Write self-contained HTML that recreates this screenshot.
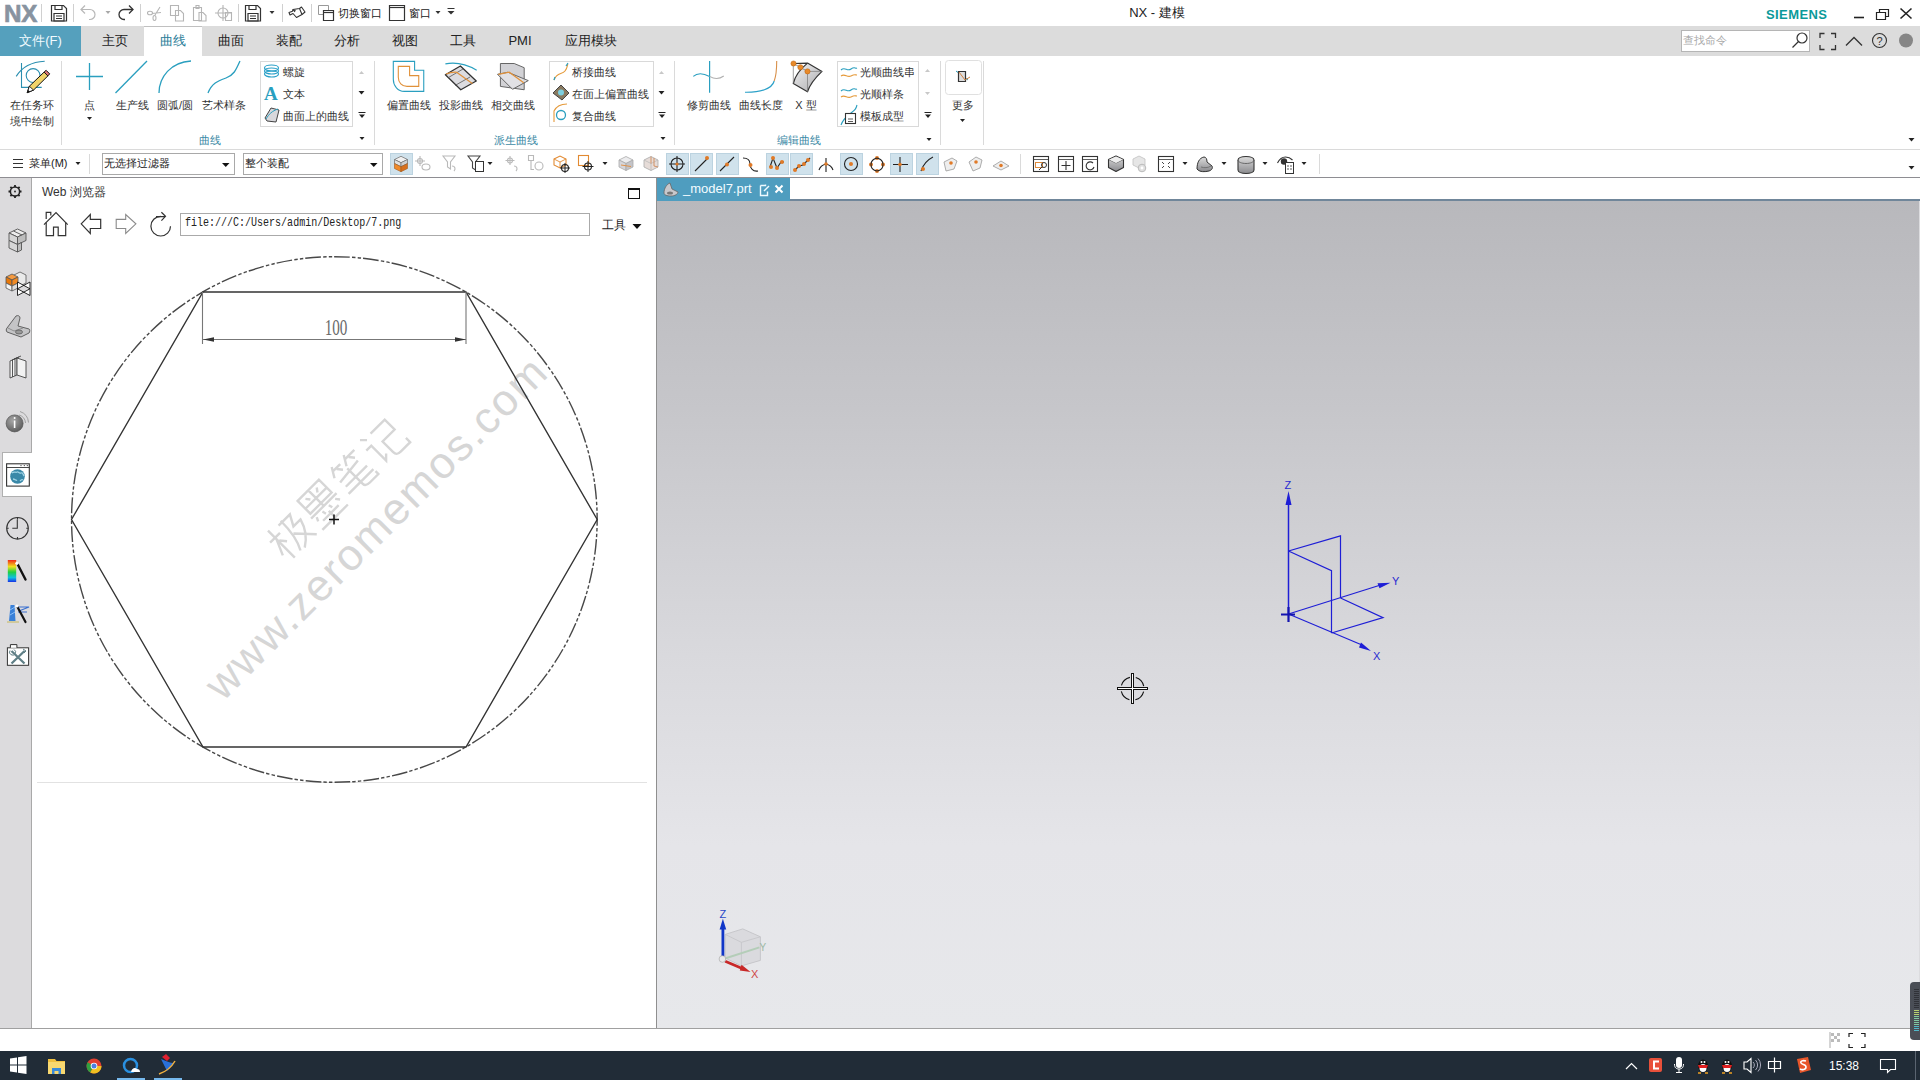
<!DOCTYPE html>
<html><head><meta charset="utf-8">
<style>
*{box-sizing:border-box;margin:0;padding:0}
html,body{width:1920px;height:1080px;overflow:hidden;background:#fff;font-family:"Liberation Sans",sans-serif;color:#222}
.a{position:absolute}
#title{left:0;top:0;width:1920px;height:26px;background:#fff}
#tabs{left:0;top:26px;width:1920px;height:30px;background:#dcdcdc}
#ribbon{left:0;top:56px;width:1920px;height:94px;background:#fff;border-bottom:1px solid #dadada}
#selbar{left:0;top:150px;width:1920px;height:28px;background:#fff;border-bottom:1px solid #8e8d92}
#leftbar{left:0;top:178px;width:32px;height:850px;background:#dcdbdd;border-right:1px solid #a9a9a9}
#web{left:32px;top:178px;width:624px;height:850px;background:#fff}
#vpborder{left:656px;top:178px;width:1px;height:850px;background:#8f8f8f}
#vptabs{left:657px;top:178px;width:1263px;height:21px;background:#fff}
#vpline{left:657px;top:199px;width:1263px;height:2px;background:#70869a}
#vp{left:657px;top:201px;width:1262px;height:827px;background:linear-gradient(#b8b8bc 0%,#c6c6ca 25%,#d9d9dd 55%,#e5e5e9 78%,#e7e8eb 100%)}
#vpright{left:1919px;top:201px;width:1px;height:827px;background:#dcdcdf}
#bottomline{left:0;top:1028px;width:1920px;height:1px;background:#a0a0a0}
#status{left:0;top:1029px;width:1920px;height:22px;background:#fff}
#taskbar{left:0;top:1051px;width:1920px;height:29px;background:#212c37}
.cj{display:inline-block;text-align:justify;text-align-last:justify;white-space:nowrap;overflow:visible}
.tab{position:absolute;top:26px;height:30px;font-size:13px;line-height:30px;text-align:center;color:#222}
</style></head>
<body>
<div id="title" class="a"></div>
<div id="tabs" class="a"></div>
<div id="ribbon" class="a"></div>
<div id="selbar" class="a"></div>
<div id="leftbar" class="a"></div>
<div id="web" class="a"></div>
<div id="vpborder" class="a"></div>
<div id="vptabs" class="a"></div>
<div id="vpline" class="a"></div>
<div id="vp" class="a"></div>
<div id="vpright" class="a"></div>
<div id="bottomline" class="a"></div>
<div id="status" class="a"></div>
<div id="taskbar" class="a"></div>
<!-- TITLE BAR -->
<div class="a" style="left:4px;top:1px;font:bold 22px/25px 'Liberation Sans',sans-serif;color:#8893a0;letter-spacing:-0.3px;-webkit-text-stroke:0.6px #8893a0;transform-origin:0 0;transform:scale(1.1,1.05)">NX</div>
<svg class="a" style="left:0;top:0" width="470" height="26">
 <g stroke="#d0d0d0" stroke-width="1"><line x1="41.5" y1="4" x2="41.5" y2="22"/><line x1="73.5" y1="4" x2="73.5" y2="22"/><line x1="140.5" y1="4" x2="140.5" y2="22"/><line x1="238.5" y1="4" x2="238.5" y2="22"/><line x1="282.5" y1="4" x2="282.5" y2="22"/><line x1="311.5" y1="4" x2="311.5" y2="22"/></g>
 <!-- save -->
 <g fill="none" stroke="#333" stroke-width="1.2"><path d="M51.5 5.5h12l3 3v12.5h-15z"/><path d="M55 5.5v4h7v-4"/><path d="M54 13.5h10v7.5H54z"/><path d="M56 16h6M56 18.5h6"/></g>
 <!-- undo gray -->
 <g fill="none" stroke="#b8b8b8" stroke-width="1.2"><path d="M81 9.5h9a5 5 0 0 1 0 10h-1"/><path d="M85 5.5l-4 4 4 4"/></g>
 <path d="M105.5 11h5l-2.5 3z" fill="#a8a8a8"/>
 <!-- redo -->
 <g fill="none" stroke="#333" stroke-width="1.3"><path d="M133 9.5h-9a5 5 0 0 0 0 10h1"/><path d="M129 5.5l4 4-4 4"/></g>
 <!-- scissors copy paste cross (gray) -->
 <g fill="none" stroke="#b5b5b5" stroke-width="1.1">
  <ellipse cx="150" cy="13" rx="2.5" ry="1.8"/><ellipse cx="154.5" cy="18" rx="1.5" ry="2.5"/><path d="M152 13.5l9-1M155 15l5-8"/>
  <path d="M170.5 5.5h8v10h-8z"/><path d="M175.5 10.5h5l3 3v7.5h-8z"/>
  <path d="M193.5 7.5h8v13h-8z"/><path d="M196 5.5h3v3h-3z"/><path d="M199 12.5h4l3 3v5.5h-7z"/>
  <circle cx="223" cy="13" r="5"/><path d="M223 5v16M215 13h16"/><path d="M225.5 12.5h6v8h-6z"/>
 </g>
 <!-- save2 -->
 <g fill="none" stroke="#333" stroke-width="1.2"><path d="M245.5 5.5h12l3 3v12.5h-15z"/><path d="M249 5.5v4h7v-4"/><path d="M248 13.5h10v7.5h-10z"/><path d="M250 16h6M250 18.5h6"/></g>
 <path d="M269.5 11h5l-2.5 3z" fill="#333"/>
 <!-- brush -->
 <path d="M293 9.5L299.5 8.5L301.5 7L305 12L302 14.5L296.5 17.5L293 13.5L290 15L289 12.5L292.5 11.2Z" fill="#fff" stroke="#333" stroke-width="1.1" stroke-linejoin="round"/><path d="M299.5 8.5L302 14.5M293 9.5l2 2.5" fill="none" stroke="#333" stroke-width="1.1"/><path d="M292.5 9.5l3.5 0.5-1.5 2z" fill="#444"/>
 <!-- switch window -->
 <g fill="#fff" stroke="#999" stroke-width="1"><path d="M318.5 5.5h10v9h-10z"/></g>
 <g fill="#fff" stroke="#333" stroke-width="1.2"><path d="M323.5 10.5h10v10h-10z"/><path d="M323.5 12.5h10"/></g>
 <g fill="none" stroke="#333" stroke-width="1.2"><path d="M389.5 5.5h15v15h-15z"/><path d="M389.5 7.5h15"/></g>
 <path d="M435.5 11h5l-2.5 3z" fill="#333"/>
 <path d="M447.5 8.5h7" stroke="#333" stroke-width="1"/><path d="M447.5 11h7l-3.5 3.5z" fill="#333"/>
</svg>
<div class="a" style="left:338px;top:6px;font-size:11px;line-height:14px;color:#222;white-space:nowrap"><span class="cj" style="width:44px">切换窗口</span></div>
<div class="a" style="left:409px;top:6px;font-size:11px;line-height:14px;color:#222;white-space:nowrap"><span class="cj" style="width:22px">窗口</span></div>
<div class="a" style="left:1100px;top:4px;width:114px;text-align:center;font-size:13px;line-height:17px;color:#222;white-space:nowrap">NX - <span class="cj" style="width:26px">建模</span></div>
<div class="a" style="left:1766px;top:7px;font:bold 13px/16px 'Liberation Sans',sans-serif;color:#0a9a9a;letter-spacing:0.4px">SIEMENS</div>
<svg class="a" style="left:1840px;top:0" width="80" height="26">
 <path d="M14 17.5h10" stroke="#222" stroke-width="1.6"/>
 <g fill="none" stroke="#222" stroke-width="1.2"><path d="M36.5 12.5h9v7h-9z"/><path d="M39.5 12.5v-3h9v7h-3"/></g>
 <path d="M60.5 8.5l11 10M71.5 8.5l-11 10" stroke="#222" stroke-width="1.6"/>
</svg>
<!-- TABS -->
<div class="a" style="left:0;top:26px;width:81px;height:30px;background:#55a0bd"></div>
<div class="a" style="left:144px;top:26px;width:58px;height:30px;background:#fff;border-top:1px solid #c0c0c0"></div>
<div class="tab" style="left:0;width:81px;color:#f2fbff"><span class="cj" style="width:26px">文件</span>(F)</div>
<div class="tab" style="left:86px;width:58px"><span class="cj" style="width:26px">主页</span></div>
<div class="tab" style="left:144px;width:58px;color:#2a7d98"><span class="cj" style="width:26px">曲线</span></div>
<div class="tab" style="left:202px;width:58px"><span class="cj" style="width:26px">曲面</span></div>
<div class="tab" style="left:260px;width:58px"><span class="cj" style="width:26px">装配</span></div>
<div class="tab" style="left:318px;width:58px"><span class="cj" style="width:26px">分析</span></div>
<div class="tab" style="left:376px;width:58px"><span class="cj" style="width:26px">视图</span></div>
<div class="tab" style="left:434px;width:58px"><span class="cj" style="width:26px">工具</span></div>
<div class="tab" style="left:491px;width:58px">PMI</div>
<div class="tab" style="left:556px;width:70px"><span class="cj" style="width:52px">应用模块</span></div>
<div class="a" style="left:1681px;top:30px;width:129px;height:22px;background:#fff;border:1px solid #b5b5b5"></div>
<div class="a" style="left:1683px;top:33px;font-size:11px;line-height:15px;color:#aaa;white-space:nowrap"><span class="cj" style="width:44px">查找命令</span></div>
<svg class="a" style="left:1785px;top:26px" width="135" height="30">
 <g fill="none" stroke="#333" stroke-width="1.2"><circle cx="17" cy="12" r="5"/><path d="M13.5 15.5l-6 6"/></g>
 <g fill="none" stroke="#333" stroke-width="1.3"><path d="M35 12v-4.5h4.5M46 7.5h4.5V12M50.5 19v4.5H46M39.5 23.5H35V19"/></g>
 <path d="M61 19.5l8-8 8 8" fill="none" stroke="#333" stroke-width="1.3"/>
 <circle cx="94.5" cy="14.5" r="7" fill="none" stroke="#333" stroke-width="1.1"/>
 <text x="94.5" y="18.5" font-size="11" text-anchor="middle" fill="#333" font-family="Liberation Sans">?</text>
 <circle cx="121" cy="14.5" r="7" fill="#868686"/>
</svg>

<!-- RIBBON -->
<style>
.lbl{position:absolute;font-size:11px;line-height:14px;color:#333;white-space:nowrap;text-align:center}
.glbl{position:absolute;top:133px;font-size:11px;line-height:14px;color:#3d8aa6;white-space:nowrap}
.gal{position:absolute;top:61px;height:66px;border:1px solid #d9d9d9;background:#fff}
.gi{position:absolute;font-size:11px;line-height:14px;color:#333;white-space:nowrap}
</style>
<svg class="a" style="left:0;top:56px" width="1920" height="93">
 <g stroke="#dadada" stroke-width="1"><line x1="61.5" y1="5" x2="61.5" y2="89"/><line x1="374.5" y1="5" x2="374.5" y2="89"/><line x1="674.5" y1="5" x2="674.5" y2="89"/><line x1="940.5" y1="5" x2="940.5" y2="89"/><line x1="983.5" y1="5" x2="983.5" y2="89"/></g>
 <!-- sketch in task env -->
 <g fill="none" stroke="#2a8fb0" stroke-width="1.1">
  <path d="M16.2 20.4C22 11 31 6 44.7 5.3"/><path d="M21.5 7.1V31.4H41.7"/><circle cx="33.1" cy="19.55" r="6.9"/>
 </g>
 <path d="M27.2 36.7l2.2-6.5 14.7-14.1 4 3.6-14.6 14.4z" fill="#f2d46a" stroke="#111" stroke-width="1"/>
 <path d="M44.1 16.1l2-1.8 3.6 3.6-1.9 2z" fill="#e07878" stroke="#111" stroke-width="1"/>
 <path d="M29.4 30.2l4.1 3.9-6.3 2.6z" fill="#fff" stroke="#111" stroke-width="0.9"/><path d="M27.2 36.7l1-2.8 1.8 1.8z" fill="#111"/>
 <!-- point -->
 <g stroke="#2a9fbf" stroke-width="1.3"><path d="M89.5 7v27M76 20.5h27"/></g>
 <!-- line -->
 <path d="M115.5 37L147 5" stroke="#2a9fbf" stroke-width="1.3"/>
 <!-- arc -->
 <path d="M159 37c0-16 12-31 32-32" fill="none" stroke="#2a9fbf" stroke-width="1.3"/>
 <!-- spline -->
 <path d="M208 37c4-10 10-12 18-15s10-8 14-17" fill="none" stroke="#2a9fbf" stroke-width="1.3"/>
 <path d="M87 61h5l-2.5 3z" fill="#222"/>
 <!-- gallery scroll arrows -->
 <path d="M359 18h5l-2.5-3z" fill="#c8c8c8"/><path d="M358.5 35h6l-3 3.5z" fill="#222"/>
 <path d="M358.5 56.5h7" stroke="#222" stroke-width="1"/><path d="M359.0 58.5h6l-3 3.5z" fill="#222"/>
 <path d="M359.5 81h5l-2.5 3z" fill="#222"/>
 <!-- offset curve -->
 <path d="M393.3 5.4H414.6V14.2H423.75V35.4H404.2C398 35.4 393.3 30 393.3 23.3Z" fill="none" stroke="#2a9fc0" stroke-width="1.1"/>
 <path d="M398.3 10.4H409.6V19.6H418.75V30.4H407C402 30.4 398.3 26.5 398.3 21.25Z" fill="none" stroke="#e0913a" stroke-width="1.1"/>
 <!-- projected curve -->
 <path d="M445.4 7.9C455 6 466 8 476.7 14.2" fill="none" stroke="#2aa0c0" stroke-width="1.1"/>
 <path d="M445.4 18.75L460.4 10L476.25 25L460.8 33.75Z" fill="#dcdce0" stroke="#333" stroke-width="1.3" stroke-linejoin="round"/>
 <path d="M448.5 21.5L463 13M455 29.5L470 21" fill="none" stroke="#555" stroke-width="0.8"/>
 <path d="M446 18C450 16.5 453 16 456.7 16.25C462 20 467 24 472.5 27.5" fill="none" stroke="#e0913a" stroke-width="1.2"/>
 <!-- intersect curve -->
 <path d="M500.4 7.5H514.2L524.2 11.7V33.75L500.4 30.4Z" fill="#d2d2d6" stroke="#666" stroke-width="1"/>
 <path d="M497.5 18.3L507.9 16.25L528.3 24.6L512.5 33.3Z" fill="#e4e4e8" fill-opacity="0.85" stroke="#666" stroke-width="1" stroke-linejoin="round"/>
 <path d="M498.3 18.3L509.2 16.25L523.75 26.7" fill="none" stroke="#e0913a" stroke-width="1.2"/>
 <!-- gallery2 arrows -->
 <path d="M659 18h5l-2.5-3z" fill="#c8c8c8"/><path d="M658.5 35h6l-3 3.5z" fill="#222"/>
 <path d="M658.5 56.5h7" stroke="#222" stroke-width="1"/><path d="M659.0 58.5h6l-3 3.5z" fill="#222"/>
 <path d="M660.5 81h5l-2.5 3z" fill="#222"/>
 <!-- trim curve -->
 <path d="M709.6 5V36.7" stroke="#2a9fc0" stroke-width="1.2"/>
 <path d="M693.3 20.4C697 17 703 17 709.6 20.4" fill="none" stroke="#2a9fc0" stroke-width="1.1"/>
 <path d="M709.6 20.4C714 23 719 23.5 723.75 20" fill="none" stroke="#b0b0b0" stroke-width="1.1"/>
 <!-- curve length -->
 <path d="M745 36.25C760 36.5 772 33 774.2 25" fill="none" stroke="#2aa0c8" stroke-width="1.2"/>
 <path d="M774.2 25C776.5 19 776.7 12 776.7 5" fill="none" stroke="#d8904a" stroke-width="1.1"/>
 <!-- X-form -->
 <defs><linearGradient id="xg" x1="0" y1="0" x2="1" y2="1"><stop offset="0" stop-color="#f4f4f4"/><stop offset="1" stop-color="#a8a8ac"/></linearGradient></defs>
 <path d="M793.3 7.5L807.5 7.1L822 15.4C815 22 810 28 807.5 35.8L793.3 27.5C795 20 799 14 807.5 7.1" fill="url(#xg)" stroke="#333" stroke-width="1.2" stroke-linejoin="round"/>
 <path d="M793.3 7.5V27.5M807.5 15.4H822M807.5 15.4V35.8" fill="none" stroke="#777" stroke-width="0.7"/>
 <path d="M793.5 7.5L807.5 15.4" stroke="#777" stroke-width="0.8"/>
 <circle cx="793.5" cy="7.5" r="2.6" fill="#e88a2a" stroke="#b86010" stroke-width="0.5"/><circle cx="800.4" cy="11.25" r="2.6" fill="#e88a2a" stroke="#b86010" stroke-width="0.5"/><circle cx="807.5" cy="15.4" r="2.6" fill="#e88a2a" stroke="#b86010" stroke-width="0.5"/>
 <!-- gallery3 arrows -->
 <path d="M925 16h5l-2.5-3z" fill="#c8c8c8"/><path d="M925 36h5l-2.5 3z" fill="#c8c8c8"/>
 <path d="M924.5 56.5h7" stroke="#222" stroke-width="1"/><path d="M925.0 58.5h6l-3 3.5z" fill="#222"/>
 <path d="M926.5 82h5l-2.5 3z" fill="#222"/>
 <!-- more button -->
 <rect x="945.5" y="4.5" width="36" height="34" rx="3" fill="#fff" stroke="#e0e0e0"/>
 <path d="M956 15l12 9" stroke="#2a9fbf" stroke-width="1"/><path d="M958.5 15.5h7v10h-7z" fill="#ddd" stroke="#333" stroke-width="1.2"/><path d="M959 16l6 8M965 24l5-3" stroke="#d08040" stroke-width="1"/>
 <path d="M960 63h5l-2.5 3z" fill="#222"/>
 <path d="M1908.5 82h6l-3 3.5z" fill="#222"/>
</svg>
<!-- gallery 1 -->
<div class="gal" style="left:260px;width:93px"></div>
<svg class="a" style="left:262px;top:62px" width="20" height="64">
 <g fill="none" stroke="#2aa0c8" stroke-width="1.2"><ellipse cx="9.5" cy="6" rx="7" ry="3"/><ellipse cx="9.5" cy="9" rx="7" ry="3"/><ellipse cx="9.5" cy="12" rx="7" ry="3"/></g>
 <text x="2" y="38" font-family="Liberation Serif" font-size="19" font-weight="bold" fill="#2a9fbf">A</text>
 <path d="M3 56l6-10 8 2-3 12-9-1z" fill="#d8d8dc" stroke="#444" stroke-width="1"/><path d="M4 57c3-5 6-8 12-10" fill="none" stroke="#2a9fbf" stroke-width="1"/>
</svg>
<div class="gi" style="left:283px;top:65px"><span class="cj" style="width:22px">螺旋</span></div>
<div class="gi" style="left:283px;top:87px"><span class="cj" style="width:22px">文本</span></div>
<div class="gi" style="left:283px;top:109px"><span class="cj" style="width:66px">曲面上的曲线</span></div>
<!-- gallery 2 -->
<div class="gal" style="left:549px;width:105px"></div>
<svg class="a" style="left:551px;top:62px" width="20" height="64">
 <path d="M3 18c3-8 8-5 11-9s2-6 3-7" fill="none" stroke="#e59a3a" stroke-width="1.1"/><path d="M3 18l1-3M15 4l2-3" stroke="#2a9fbf" stroke-width="1.2"/>
 <path d="M2 31l8-8 8 8-7 7z" fill="#8a7a60" stroke="#444" stroke-width="1"/><circle cx="10" cy="30.5" r="3" fill="#7dd0e0"/>
 <path d="M3 60v-11c2-4 7-7 13-7" fill="none" stroke="#e59a3a" stroke-width="1.1"/><circle cx="10" cy="53" r="4.5" fill="none" stroke="#2a9fbf" stroke-width="1.3"/>
</svg>
<div class="gi" style="left:572px;top:65px"><span class="cj" style="width:44px">桥接曲线</span></div>
<div class="gi" style="left:572px;top:87px"><span class="cj" style="width:77px">在面上偏置曲线</span></div>
<div class="gi" style="left:572px;top:109px"><span class="cj" style="width:44px">复合曲线</span></div>
<!-- gallery 3 -->
<div class="gal" style="left:837px;width:82px"></div>
<svg class="a" style="left:839px;top:62px" width="20" height="64">
 <path d="M2 8c4-4 6 2 10-1s4 0 6-1" fill="none" stroke="#2a9fbf" stroke-width="1.1"/><path d="M2 14c4-3 6 2 10 0s4-1 6-1" fill="none" stroke="#e59a3a" stroke-width="1.1"/>
 <path d="M2 29c4-4 6 2 10-1s4 0 6-1" fill="none" stroke="#2a9fbf" stroke-width="1.1"/><path d="M2 35c4-3 6 2 10 0s4-1 6-1" fill="none" stroke="#e59a3a" stroke-width="1.1"/>
 <path d="M2 63c2-6 6-9 10-12s5-4 6-8" fill="none" stroke="#2a9fbf" stroke-width="1.1"/><rect x="6.5" y="51.5" width="10" height="10" fill="#fff" stroke="#333" stroke-width="1.1"/><path d="M9 57h5M9 59.5h5" stroke="#333" stroke-width="0.8"/>
</svg>
<div class="gi" style="left:860px;top:65px"><span class="cj" style="width:55px">光顺曲线串</span></div>
<div class="gi" style="left:860px;top:87px"><span class="cj" style="width:44px">光顺样条</span></div>
<div class="gi" style="left:860px;top:109px"><span class="cj" style="width:44px">模板成型</span></div>
<!-- labels -->
<div class="lbl" style="left:6px;top:98px;width:52px"><span class="cj" style="width:44px">在任务环</span></div>
<div class="lbl" style="left:6px;top:114px;width:52px"><span class="cj" style="width:44px">境中绘制</span></div>
<div class="lbl" style="left:75px;top:98px;width:28px"><span class="cj" style="width:11px;text-align-last:center">点</span></div>
<div class="lbl" style="left:108px;top:98px;width:48px"><span class="cj" style="width:33px">生产线</span></div>
<div class="lbl" style="left:151px;top:98px;width:48px"><span class="cj" style="width:22px">圆弧</span>/<span class="cj" style="width:11px;text-align-last:center">圆</span></div>
<div class="lbl" style="left:198px;top:98px;width:52px"><span class="cj" style="width:44px">艺术样条</span></div>
<div class="glbl" style="left:199px"><span class="cj" style="width:22px">曲线</span></div>
<div class="lbl" style="left:385px;top:98px;width:48px"><span class="cj" style="width:44px">偏置曲线</span></div>
<div class="lbl" style="left:437px;top:98px;width:48px"><span class="cj" style="width:44px">投影曲线</span></div>
<div class="lbl" style="left:489px;top:98px;width:48px"><span class="cj" style="width:44px">相交曲线</span></div>
<div class="glbl" style="left:494px"><span class="cj" style="width:44px">派生曲线</span></div>
<div class="lbl" style="left:685px;top:98px;width:48px"><span class="cj" style="width:44px">修剪曲线</span></div>
<div class="lbl" style="left:737px;top:98px;width:48px"><span class="cj" style="width:44px">曲线长度</span></div>
<div class="lbl" style="left:790px;top:98px;width:32px">X <span class="cj" style="width:11px;text-align-last:center">型</span></div>
<div class="glbl" style="left:777px"><span class="cj" style="width:44px">编辑曲线</span></div>
<div class="lbl" style="left:944px;top:98px;width:38px"><span class="cj" style="width:22px">更多</span></div>

<!-- SELECTION BAR -->
<div class="a" style="left:13px;top:159px;width:10px;height:9px;border-top:1px solid #333;border-bottom:1px solid #333"><div style="margin-top:3px;border-top:1px solid #333"></div></div>
<div class="a" style="left:29px;top:156px;font-size:11px;line-height:14px;color:#222;white-space:nowrap"><span class="cj" style="width:22px">菜单</span>(M)</div>
<svg class="a" style="left:0;top:150px" width="1920" height="28">
 <path d="M75.5 12h5l-2.5 3z" fill="#222"/>
 <line x1="89.5" y1="4" x2="89.5" y2="24" stroke="#dadada"/>
 <rect x="102.5" y="3.5" width="132" height="21" fill="#fff" stroke="#a9a9a9"/>
 <rect x="243.5" y="3.5" width="139" height="21" fill="#fff" stroke="#a9a9a9"/>
 <path d="M222 13h7.5l-3.75 4z" fill="#111"/>
 <path d="M370 13h7.5l-3.75 4z" fill="#111"/>
 <!-- highlighted buttons -->
 <g fill="#d0e2ec" stroke="#bcd3e0" stroke-width="1">
  <rect x="390.5" y="3.5" width="22" height="21"/>
  <rect x="666.5" y="3.5" width="22" height="21"/><rect x="690.5" y="3.5" width="22" height="21"/>
  <rect x="716.5" y="3.5" width="22" height="21"/>
  <rect x="766.5" y="3.5" width="22" height="21"/><rect x="790.5" y="3.5" width="22" height="21"/>
  <rect x="840.5" y="3.5" width="22" height="21"/>
  <rect x="890.5" y="3.5" width="22" height="21"/><rect x="916.5" y="3.5" width="22" height="21"/>
 </g>
 <!-- select cube -->
 <path d="M394.5 9.5l6.5-3.2 6.5 3.2-6.5 3.2z" fill="#f0f0f0" stroke="#777" stroke-width="0.8"/><path d="M394.5 9.5v4l6.5 3.2v-4z" fill="#e0e0e0" stroke="#777" stroke-width="0.8"/><path d="M401 12.7v4l6.5-3.2v-4z" fill="#d0d0d0" stroke="#777" stroke-width="0.8"/><path d="M394.5 13.5v5l6.5 3.2v-5z" fill="#f08a2a" stroke="#a05a20" stroke-width="0.6"/><path d="M401 16.7v5l6.5-3.2v-5z" fill="#d8701c" stroke="#a05a20" stroke-width="0.6"/>
 <!-- gray icons -->
 <g fill="none" stroke="#b9b9b9" stroke-width="1.1">
  <path d="M420 6v10M415 11h10"/><circle cx="420" cy="11" r="2.5"/><ellipse cx="426" cy="17" rx="4" ry="3"/>
  <path d="M443 6h12l-4.5 6v7l-3-2v-5z"/><path d="M452 16c3 0 4 3 2 5"/>
  <path d="M510 6v9M505.5 10.5h9"/><circle cx="510" cy="10.5" r="2.5"/><path d="M514 16c3 0 4 3 2 5"/>
  <path d="M528.5 5.5h5v5h-5zM531 10.5v9h3"/><circle cx="539" cy="16" r="4"/>
 </g>
 <path d="M468 6h12l-4.5 6v8l-3-2v-6z" fill="none" stroke="#444" stroke-width="1.1"/><rect x="475.5" y="11.5" width="8" height="10" fill="#fff" stroke="#333" stroke-width="1"/>
 <path d="M487.5 12h5l-2.5 3z" fill="#222"/>
 <path d="M554 9l6-3 6 3v6l-6 3-6-3z" fill="none" stroke="#e28a32" stroke-width="1.1"/><path d="M554 9l6 3 6-3M560 12v6" fill="none" stroke="#e28a32" stroke-width="0.9"/><circle cx="565" cy="18" r="3.5" fill="none" stroke="#222" stroke-width="1.1"/><path d="M565 13v10M560 18h10" stroke="#222" stroke-width="1"/>
 <rect x="578.5" y="5.5" width="10" height="10" fill="none" stroke="#e28a32" stroke-width="1.1"/><circle cx="588" cy="16.5" r="3.5" fill="none" stroke="#222" stroke-width="1.1"/><path d="M588 11v11M582.5 16.5h11" stroke="#222" stroke-width="1"/>
 <path d="M602.5 12h5l-2.5 3z" fill="#222"/>
 <path d="M619 10l7-3.5 7 3.5-7 3.5z" fill="#ececee" stroke="#aaa" stroke-width="0.8"/><path d="M619 10v7l7 3.5v-7z" fill="#d6d6da" stroke="#aaa" stroke-width="0.8"/><path d="M626 13.5v7l7-3.5v-7z" fill="#c4c4c8" stroke="#aaa" stroke-width="0.8"/><path d="M621 15l10 1.5" stroke="#e08a3a" stroke-width="0.9"/>
 <path d="M644 10l7-3.5 7 3.5v7l-7 3.5-7-3.5z" fill="#e6dcd8" stroke="#aaa" stroke-width="0.8"/><path d="M644 10l7 3.5 7-3.5M651 13.5v7" fill="none" stroke="#bbb" stroke-width="0.8"/><path d="M651 6.5v7M654 8v8l4 1" stroke="#d08a5a" stroke-width="0.9" fill="none"/>
 <!-- snap icons -->
 <g fill="none" stroke="#222" stroke-width="1.1">
  <circle cx="677" cy="14" r="6"/><path d="M677 6v16M669 14h16"/>
  <path d="M695 21l13-13"/>
  <path d="M720 21l14-14"/>
  <path d="M743 8c5 0 7 2 7 6s3 8 8 7"/>
  <path d="M770 17l3-9 4 10 4-6 3 0"/>
  <path d="M795 20l4-4 4-1 4-4 3-3"/>
  <path d="M826 22v-14M826 14c-4 1-6 3-7 6M826 14c4 1 6 3 7 6"/>
  <circle cx="851" cy="14" r="6.5"/>
  <path d="M900 7v15M893 14.5h15"/>
  <path d="M921 21c2-6 6-11 12-14"/>
 </g>
 <g fill="#e07a28">
  <circle cx="677" cy="14" r="1.6"/><circle cx="707" cy="8" r="2"/><circle cx="727" cy="14.5" r="2"/><circle cx="750.5" cy="15" r="2"/>
  <circle cx="773" cy="8" r="2"/><circle cx="771" cy="17" r="2"/><circle cx="777" cy="18" r="2"/><circle cx="782" cy="12" r="2"/>
  <circle cx="795" cy="20" r="2"/><circle cx="799" cy="16" r="2"/><circle cx="804" cy="14" r="2"/><circle cx="808" cy="10" r="2"/>
  <circle cx="826" cy="14" r="1.8"/><circle cx="851" cy="14" r="2"/>
  <circle cx="877" cy="8" r="2"/><circle cx="877" cy="21" r="2"/><circle cx="871" cy="14.5" r="2"/><circle cx="883" cy="14.5" r="2"/>
  <circle cx="900" cy="14.5" r="1.8"/><circle cx="923" cy="19" r="2"/>
 </g>
 <path d="M877 8c4 1 6 3 6 6.5s-2 6-6 6.5c-4-.5-6-3-6-6.5s2-5.5 6-6.5z" fill="none" stroke="#222" stroke-width="1.1"/>
 <path d="M944 12l8-4 5 3-3 8-8 2z" fill="#eee" stroke="#999" stroke-width="0.8"/><circle cx="951" cy="13" r="1.8" fill="#e07a28"/>
 <path d="M969 12l7-5 6 3-2 8-7 3z" fill="#eee" stroke="#999" stroke-width="0.8"/><circle cx="976" cy="12" r="1.8" fill="#e07a28"/>
 <path d="M993 16l8-5 8 5-8 4z" fill="#eee" stroke="#999" stroke-width="0.8"/><circle cx="1001" cy="15.5" r="1.8" fill="#e07a28"/>
 <line x1="1020.5" y1="4" x2="1020.5" y2="24" stroke="#dadada"/>
 <!-- view icons -->
 <g fill="#fff" stroke="#333" stroke-width="1.1">
  <rect x="1033.5" y="6.5" width="15" height="15"/><rect x="1058.5" y="6.5" width="15" height="15"/><rect x="1082.5" y="6.5" width="15" height="15"/><rect x="1158.5" y="6.5" width="15" height="15"/>
 </g>
 <g fill="none" stroke="#333" stroke-width="0.8"><path d="M1033.5 9.5h15M1058.5 9.5h15M1082.5 9.5h15M1158.5 9.5h15"/></g>
 <rect x="1035.5" y="12.5" width="7" height="5" fill="none" stroke="#e08a3a" stroke-width="1"/><circle cx="1044" cy="15" r="2.5" fill="none" stroke="#333" stroke-width="1"/><path d="M1042 17l-3 3" stroke="#333"/>
 <path d="M1066 11v9M1061.5 15.5h9" stroke="#333" stroke-width="1.1"/>
 <path d="M1093 13a4 4 0 1 0 1 4" fill="none" stroke="#333" stroke-width="1.1"/>
 <defs><linearGradient id="cg" x1="0" y1="0" x2="0" y2="1"><stop offset="0" stop-color="#dcdcdc"/><stop offset="1" stop-color="#8a8a8e"/></linearGradient></defs>
 <path d="M1108.5 9.5l7.5-3.5 7.5 3.5v8l-7.5 4-7.5-4z" fill="url(#cg)" stroke="#333" stroke-width="1.1" stroke-linejoin="round"/><path d="M1108.5 9.5l7.5 3.5 7.5-3.5" fill="none" stroke="#555" stroke-width="0.8"/><path d="M1109 9.6l7 3.3 7-3.3-7-3.2z" fill="#eee"/>
 <path d="M1133 9l6-3 6 3v6l-6 3-6-3z" fill="#e6e6e6" stroke="#c0c0c0" stroke-width="0.8"/><circle cx="1142" cy="18" r="3.8" fill="#e0e0e0" stroke="#bbb"/><circle cx="1142" cy="18" r="1.4" fill="#fff"/>
 <path d="M1162 12l2 2M1170 12l-2 2M1162 18l2-2M1170 18l-2-2" stroke="#333" stroke-width="0.9"/>
 <path d="M1182.5 12h5l-2.5 3z" fill="#222"/>
 <path d="M1197 19c0-6 2-11 7-12 2 0 3 2 3 5l5 4c1 2 0 4-3 5-4 1-9 1-11-1z" fill="url(#cg)" stroke="#333" stroke-width="1" stroke-linejoin="round"/><path d="M1201 17c3 1 7 1 10-1" fill="none" stroke="#666" stroke-width="0.8"/>
 <path d="M1221.5 12h5l-2.5 3z" fill="#222"/>
 <path d="M1238 10c0-2 3.5-3.5 8-3.5s8 1.5 8 3.5v10c0 2-3.5 3.5-8 3.5s-8-1.5-8-3.5z" fill="url(#cg)" stroke="#333" stroke-width="1.1"/><path d="M1238 10c0 2 3.5 3.5 8 3.5s8-1.5 8-3.5" fill="none" stroke="#555" stroke-width="0.8"/>
 <path d="M1262.5 12h5l-2.5 3z" fill="#222"/>
 <path d="M1277.5 13c2-4 5-6 8-6s5 1 7 3" fill="none" stroke="#333" stroke-width="1.1"/><circle cx="1284" cy="11.5" r="3.2" fill="#333"/><rect x="1285.5" y="12.5" width="8" height="11" fill="#fff" stroke="#333"/><path d="M1287 16h2M1287 19h2M1290 16h2M1290 19h2" stroke="#333" stroke-width="0.8"/>
 <path d="M1301.5 12h5l-2.5 3z" fill="#222"/>
 <line x1="1319.5" y1="4" x2="1319.5" y2="24" stroke="#dadada"/>
 <path d="M1908.5 16h6l-3 3.5z" fill="#222"/>
</svg>
<div class="a" style="left:104px;top:156px;font-size:11px;line-height:14px;color:#222;white-space:nowrap"><span class="cj" style="width:66px">无选择过滤器</span></div>
<div class="a" style="left:245px;top:156px;font-size:11px;line-height:14px;color:#222;white-space:nowrap"><span class="cj" style="width:44px">整个装配</span></div>

<!-- LEFT BAR -->
<div class="a" style="left:2px;top:452px;width:30px;height:45px;background:#fff;border:1px solid #b0b0b0;border-right:none"></div>
<svg class="a" style="left:0;top:178px" width="32" height="500">
 <!-- gear -->
 <g transform="translate(15,13.5)"><circle r="4.6" fill="none" stroke="#222" stroke-width="1.5"/><g stroke="#222" stroke-width="1.8"><path d="M0 -6.5v2M0 4.5v2M-6.5 0h2M4.5 0h2M-4.6 -4.6l1.4 1.4M3.2 3.2l1.4 1.4M4.6 -4.6l-1.4 1.4M-3.2 3.2l-1.4 1.4"/></g><circle r="0.9" fill="#222"/></g>
 <!-- assembly cubes -->
 <g stroke="#555" stroke-width="0.9" stroke-linejoin="round">
  <path d="M9 55l8.5-4 8.5 4-8.5 4z" fill="#ececec"/>
  <path d="M9 55v7.5l8.5 4V59z" fill="#d6d6d6"/>
  <path d="M17.5 59v7.5l8.5-4V55z" fill="#bdbdbd"/>
  <path d="M9 62.5v7.5l8.5 4v-7.5z" fill="#d6d6d6"/>
  <path d="M17.5 66.5V74l-0 0" fill="none"/>
  <path d="M17.5 66.5V74l4-2v-7.5z" fill="#bdbdbd"/>
  <path d="M13.5 53l8.5 4" fill="none"/>
 </g>
 <!-- part nav -->
 <g stroke="#555" stroke-width="0.8" stroke-linejoin="round">
  <path d="M14 97l6-3 6 3v8l-6 3-6-3z" fill="#eaeaea"/>
  <path d="M6 99l6-3 6 3-6 3z" fill="#f59a40"/><path d="M6 99v6l6 3v-6z" fill="#e8780a"/><path d="M12 102v6l6-3v-6z" fill="#f08a24"/>
  <path d="M6 105v5l6 3v-5z" fill="#f4f4f4"/><path d="M12 108v5l6-3v-5z" fill="#dcdcdc"/>
 </g>
 <path d="M17.5 104v13.5L30 110.8zM30 104v13.5l-12.5-6.7z" fill="#fff" stroke="#111" stroke-width="0.9" stroke-linejoin="round"/>
 <!-- bracket -->
 <path d="M7 150l9-12c2-1 4 0 4 2l-2 8 11 3c1 0 1 3 0 4l-8 4-14-5c-1-1-1-3 0-4z" fill="#c4c4c6" stroke="#555" stroke-width="0.9"/>
 <path d="M8 150l6 3 9-3" fill="none" stroke="#777" stroke-width="0.7"/><ellipse cx="19" cy="154" rx="3.5" ry="2" fill="#999" stroke="#555" stroke-width="0.7"/>
 <!-- books -->
 <g fill="#f2f2f2" stroke="#444" stroke-width="0.9" stroke-linejoin="round">
  <path d="M10 183l7-3v17l-7 3z"/><path d="M17 180l9 3v17l-9-3z"/>
  <path d="M12 182l7-3M14 181l7-3" fill="none"/><path d="M12.5 182v17M15 181v17" fill="none"/>
 </g>
 <!-- info -->
 <defs><radialGradient id="ig" cx=".4" cy=".35" r=".7"><stop offset="0" stop-color="#a8a8a8"/><stop offset="1" stop-color="#5a5a5a"/></radialGradient></defs>
 <circle cx="14.6" cy="245.4" r="8.5" fill="url(#ig)" stroke="#555" stroke-width="0.7"/><path d="M14.6 242.5v7.5" stroke="#fff" stroke-width="1.6"/><circle cx="14.6" cy="240" r="1" fill="#fff"/>
 <path d="M19 237a9 9 0 0 1 6.5 8M20 233.5a12.5 12.5 0 0 1 8.5 11" fill="none" stroke="#999" stroke-width="0.9"/>
 <!-- browser -->
 <rect x="6.6" y="285.8" width="22.7" height="22.3" fill="#fff" stroke="#333" stroke-width="1.1"/><path d="M6.6 289.5h22.7" stroke="#333" stroke-width="0.9"/>
 <circle cx="21" cy="287.6" r="0.6" fill="#333"/><circle cx="24.3" cy="287.6" r="0.6" fill="#333"/><circle cx="27.3" cy="287.6" r="0.6" fill="#333"/>
 <circle cx="17.5" cy="298.5" r="7.3" fill="#3a88a8"/><path d="M12 295c2-2 4 0 5-1s2 2 4 1 2 2 3 3M13 301c2 0 3 2 4 1M20 303c1-1 2-2 3-1" stroke="#9fd4e6" stroke-width="1.3" fill="none"/>
 <!-- clock -->
 <circle cx="17.5" cy="350.3" r="10.8" fill="none" stroke="#333" stroke-width="1.1"/><path d="M17.3 341.5v8.8h-5" fill="none" stroke="#333" stroke-width="1.1"/>
 <path d="M17.5 339.5v2M17.5 359v2M6.7 350.3h2M26.3 350.3h2" stroke="#333" stroke-width="1.1"/>
 <!-- color -->
 <defs><linearGradient id="rb" x1="0" y1="0" x2="0" y2="1"><stop offset="0" stop-color="#f02818"/><stop offset=".3" stop-color="#f0e020"/><stop offset=".55" stop-color="#20d040"/><stop offset=".8" stop-color="#10c0e0"/><stop offset="1" stop-color="#1830e8"/></linearGradient></defs>
 <rect x="7.8" y="382" width="8.4" height="22" fill="url(#rb)"/><path d="M17.5 386l8 15.5" stroke="#111" stroke-width="2.4" stroke-linecap="round"/><circle cx="16.9" cy="385.3" r="1.6" fill="#fff"/>
 <!-- analysis -->
 <path d="M9 443l1.5-16h4l1 16z" fill="#3a80d8"/><path d="M10 432l5-3M10 437l5-3" stroke="#a0d0ff" stroke-width="0.8"/><path d="M16 429h13l-10 4M18 434h9" fill="none" stroke="#3a70d0" stroke-width="1.1"/>
 <path d="M7 444h12" stroke="#c0b040" stroke-width="0.8"/>
 <path d="M17.5 429l8 15" stroke="#111" stroke-width="2.2" stroke-linecap="round"/><circle cx="16.9" cy="428" r="1.6" fill="#fff"/>
 <!-- tools -->
 <rect x="7.4" y="469.8" width="21.2" height="17.5" fill="#fff" stroke="#333" stroke-width="1"/><path d="M10.4 469.8v-3.2h6.5v3.2" fill="#fff" stroke="#333" stroke-width="1"/>
 <path d="M11.5 485.5l13-12.5M11.5 473l13 12.5" stroke="#5f7f86" stroke-width="2.3"/><path d="M10 472.5a3 3 0 1 0 4 -1M23 471l3 2-2 2" fill="none" stroke="#5f7f86" stroke-width="1"/>
</svg>
<!-- WEB PANEL -->
<div class="a" style="left:42px;top:185px;font-size:12px;line-height:15px;color:#333;white-space:nowrap">Web <span class="cj" style="width:36px">浏览器</span></div>
<div class="a" style="left:628px;top:188px;width:12px;height:11px;border:1.2px solid #111;border-top-width:2px"></div>
<svg class="a" style="left:32px;top:200px" width="624" height="40">
 <g fill="none" stroke="#333" stroke-width="1.2">
  <path d="M14.2 19V12.3H18.8V15.5"/><path d="M12 24.7L24 12.7L35.7 24.7"/><path d="M14.2 22.5V35.6H21.5V27.2H26.2V35.6H33.7V22.5"/>
  <path d="M49.2 23.8L58.3 14.5V19.4H68.7V28.5H58.3V33.4Z"/>
  <path d="M128.7 16.4A9.8 9.8 0 1 0 138.5 26.2"/><path d="M124 16.6L133.3 16.3M129.4 12.3L133.5 16.3L129.4 20.7"/>
 </g>
 <path d="M84.2 19.4H93.7V14.5L103.9 23.8L93.7 33.4V28.5H84.2Z" fill="none" stroke="#8a8a8a" stroke-width="1.1"/>
 <rect x="148.5" y="13.5" width="409" height="22" fill="#fff" stroke="#aaa"/>
 <path d="M600.5 24h9l-4.5 5z" fill="#111"/>
</svg>
<div class="a" style="left:185px;top:215px;transform-origin:0 0;transform:scaleX(0.77);font:13px/16px 'Liberation Mono',monospace;color:#222;white-space:nowrap">file:///C:/Users/admin/Desktop/7.png</div>
<div class="a" style="left:602px;top:217px;font-size:12px;line-height:16px;color:#222;white-space:nowrap"><span class="cj" style="width:24px">工具</span></div>
<!-- drawing -->
<div class="a" style="left:37px;top:782px;width:610px;height:1px;background:#e2e2e2"></div>
<svg class="a" style="left:0;top:0" width="660" height="800">
 <g fill="#d6d6d6" font-family="Liberation Sans">
  <text transform="translate(386,539) rotate(-45)" x="0" y="0" font-size="44" text-anchor="middle" textLength="462" lengthAdjust="spacing">www.zeromemos.com</text>
 <g fill="none" stroke="#d6d6d6" stroke-width="2.4" stroke-linecap="butt" stroke-linejoin="miter">
  <path transform="translate(290.6,534.9) rotate(-45) translate(-21,-21)" d="M1 12H15M8 2V40M8 14L1 30M9 17L14 23M24 4C24 20 22 30 17 39M19 6H35L29 17H39C36 28 30 35 22 40M24 22L40 39"/>
  <path transform="translate(321.7,503.8) rotate(-45) translate(-21,-21)" d="M6 2H36V20H6ZM13 6L16 10M29 6L26 10M21 2V24M6 13H36M3 24H39M8 27L6 31M16 27L17 31M25 27L26 31M34 27L37 31M10 34H32M21 31V40M3 40H39"/>
  <path transform="translate(352.9,472.6) rotate(-45) translate(-21,-21)" d="M10 2L4 12M8 6H18M12 7L16 12M27 2L21 12M25 6H38M29 7L33 12M5 19L33 16M6 26H36M3 33H38M20 14V36C20 39 22 40 26 40H38V36"/>
  <path transform="translate(384.0,441.5) rotate(-45) translate(-21,-21)" d="M5 3L10 8M2 15H9V36L14 31M17 6H37V20H20V35C20 39 22 40 26 40H39V34"/>
 </g>
 </g>
</svg>

<svg class="a" style="left:32px;top:240px" width="624" height="550" >
 <g transform="translate(-32,-240)">
  <circle cx="334.35" cy="519.5" r="262.8" fill="none" stroke="#484848" stroke-width="1.4" stroke-dasharray="15.7 2.25 3.45 2.2 3.4 2.0" stroke-dashoffset="9.3"/>
  <path d="M71.5 519.5L203 292L466 292L597.2 519.5L466 747L203 747Z" fill="none" stroke="#333" stroke-width="1.35"/>
  <g stroke="#777" stroke-width="1.1"><path d="M202.5 292v52M466 292v52M203 339.5h263"/></g>
  <path d="M203 339.5l11-2.2v4.4zM466 339.5l-11-2.2v4.4z" fill="#333"/>
  <path d="M329 519.5h10M334 514.5v10" stroke="#111" stroke-width="1.5"/>
 </g>
</svg>
<div class="a" style="left:306px;top:313px;width:60px;text-align:center;font:24px/28px 'Liberation Serif',serif;color:#6a6a6a;transform:scaleX(0.63)">100</div>

<!-- VIEWPORT TAB -->
<div class="a" style="left:657px;top:178px;width:133px;height:23px;background:#4f9dbf"></div>
<svg class="a" style="left:657px;top:178px" width="140" height="23">
 <path d="M7 15c0-5 3-9 6-10l2 6 6 3c0 2-3 4-7 4s-7-1-7-3z" fill="#c8c8cc" stroke="#666" stroke-width="0.8"/><ellipse cx="13" cy="15" rx="3" ry="1.6" fill="#777"/>
 <g fill="none" stroke="#eefaff" stroke-width="1.4"><path d="M103.5 7.5h5v-1M103.5 7.5v10h7v-4"/><path d="M107 13l5-5"/></g>
 <path d="M118.5 7.5l7 7M125.5 7.5l-7 7" stroke="#fff" stroke-width="2"/>
</svg>
<div class="a" style="left:683px;top:181px;font-size:13px;line-height:16px;color:#f4fcff;white-space:nowrap">_model7.prt</div>
<!-- WCS triad -->
<svg class="a" style="left:1260px;top:470px" width="160" height="200">
 <g fill="none" stroke="#1e1ed6" stroke-width="1.2">
  <path d="M28.5 144V34" stroke-width="1.5"/>
  <path d="M28.5 81L80.5 65.8V128"/>
  <path d="M28.5 81L71.5 100.7V163"/>
  <path d="M28.5 144L119 115.5"/>
  <path d="M28.5 144L102 175"/>
  <path d="M80.5 128L123 147.6L71.5 163"/>
 </g>
 <path d="M28.5 21l-3 14h6z" fill="#1e1ed6"/>
 <path d="M130.5 112.7l-13 0.5 2 5z" fill="#1e1ed6"/>
 <path d="M111 181l-10-8.5-2 5z" fill="#1e1ed6"/>
 <path d="M21 144.5h14M28.5 137v15" stroke="#1414b0" stroke-width="2.2"/>
 <g fill="#2a2ad0" font-family="Liberation Sans" font-size="11">
  <text x="24.5" y="18.5">Z</text><text x="132" y="114.5">Y</text><text x="113" y="190">X</text>
 </g>
</svg>
<!-- cursor -->
<svg class="a" style="left:1112px;top:668px" width="40" height="40">
 <circle cx="20.5" cy="20.6" r="11.5" fill="none" stroke="#111" stroke-width="1.1" stroke-dasharray="12.04 6.02" stroke-dashoffset="15.05"/>
 <rect x="19" y="5" width="3" height="31" fill="#111"/><rect x="5" y="19" width="31" height="3" fill="#111"/>
 <rect x="20" y="6" width="1" height="29" fill="#fff"/><rect x="6" y="20" width="29" height="1" fill="#fff"/>
</svg>
<!-- small triad -->
<svg class="a" style="left:700px;top:900px" width="80" height="90">
 <path d="M25.2 34.4L42.8 28.9L60.4 36.8V60.4L41.4 65.9L25.2 58Z" fill="#d6d6da" fill-opacity="0.75" stroke="#c0c0c4" stroke-width="0.8"/>
 <path d="M25.2 34.4L41.4 42.3L60.4 36.8M41.4 42.3V65.9" fill="none" stroke="#c4c4c8" stroke-width="0.8"/>
 <path d="M25 58.5L59.4 47.4" stroke="#b4cdb8" stroke-width="2"/>
 <text x="59.5" y="51" font-size="10" fill="#9cb8a4" font-family="Liberation Sans">Y</text>
 <path d="M22.9 56V28" stroke="#1036c8" stroke-width="2.8"/><path d="M22.9 18.7L19.6 29.5H26.2Z" fill="#1036c8"/>
 <path d="M25.2 61.3L44 69.2" stroke="#c82828" stroke-width="2.8"/><path d="M50.6 72L41.5 64.8L39.8 70.5Z" fill="#c82828"/>
 <circle cx="22.4" cy="59" r="3.3" fill="#eaeaea" stroke="#a0a0a0" stroke-width="0.6"/>
 <text x="19.5" y="17.8" font-size="11" fill="#2a48c8" font-family="Liberation Sans">Z</text>
 <text x="51" y="78.4" font-size="11" fill="#d04848" font-family="Liberation Sans">X</text>
</svg>
<!-- volume meter widget -->
<div class="a" style="left:1910px;top:982px;width:10px;height:58px;background:#4a4e56;border-radius:4px 0 0 4px"></div>
<svg class="a" style="left:1910px;top:982px" width="10" height="58">
 <g stroke="#303238" stroke-width="1"><path d="M4 7.5h5M4 9.5h5M4 11.5h5M4 13.5h5M4 15.5h5M4 17.5h5M4 19.5h5M4 21.5h5M4 23.5h5M4 25.5h5"/></g>
 <g stroke="#b8d070" stroke-width="1"><path d="M4 28.5h5M4 30.5h5M4 32.5h5"/></g>
 <g stroke="#80c8a0" stroke-width="1"><path d="M4 34.5h5M4 36.5h5M4 38.5h5M4 40.5h5M4 42.5h5"/></g>
 <g stroke="#50b8c8" stroke-width="1"><path d="M4 44.5h5M4 46.5h5M4 48.5h5"/></g>
</svg>
<!-- status bar icons -->
<svg class="a" style="left:1825px;top:1029px" width="50" height="22">
 <g fill="#bbb"><rect x="6" y="4" width="3" height="3"/><rect x="12" y="4" width="3" height="3"/><rect x="9" y="7" width="3" height="3"/><rect x="6" y="10" width="3" height="3"/><rect x="12" y="10" width="3" height="3"/></g>
 <path d="M5 3v16" stroke="#aaa" stroke-width="1"/>
 <path d="M24 8V4.5h4M36 4.5h4V8M40 15v3.5h-4M28 18.5h-4V15" fill="none" stroke="#222" stroke-width="1.2"/>
</svg>
<!-- TASKBAR -->
<svg class="a" style="left:0;top:1051px" width="1920" height="29">
 <g fill="#fff"><path d="M10 7.5l7-1v7h-7zM18 6.3l8.5-1.2v8.4H18zM10 14.5h7v7l-7-1zM18 14.5h8.5v8.4L18 21.7z"/></g>
 <path d="M48 8h7l1.5 2H65v13H48z" fill="#f0c040"/><path d="M48 11h17v12H48z" fill="#f8d870"/><path d="M52 17h9v6h-2.5v-3h-4v3H52z" fill="#3a8ad8"/>
 <circle cx="94" cy="15" r="7.5" fill="#e04030"/><path d="M94 15L87.5 11.3A7.5 7.5 0 0 0 90.3 21.5z" fill="#30a040"/><path d="M94 15L90.3 21.5A7.5 7.5 0 0 0 101.5 15z" fill="#f0c020"/><circle cx="94" cy="15" r="3.3" fill="#fff"/><circle cx="94" cy="15" r="2.5" fill="#4a80e0"/>
 <circle cx="130.5" cy="14.5" r="6.5" fill="none" stroke="#2a90e0" stroke-width="2.5"/><path d="M131 21c1-4 4-5 6-3 2 0 3 1 3 3z" fill="#fff"/>
 <path d="M161 8l6 12 7-8c-4 0-8-2-13-4z" fill="#2a70d8"/><path d="M162 6l4-3 4 4-3 3z" fill="#e02030"/><path d="M159 23c6-2 12-6 16-13" fill="none" stroke="#f0b040" stroke-width="1.5"/>
 <rect x="117" y="27" width="28" height="2" fill="#76b9ed"/><rect x="154" y="27" width="28" height="2" fill="#76b9ed"/>
 <!-- tray -->
 <path d="M1626 18l5.5-5.5 5.5 5.5" fill="none" stroke="#fff" stroke-width="1.2"/>
 <rect x="1649" y="7" width="13" height="14" rx="2" fill="#e8503a"/><path d="M1659 10.5h-5v7h5" fill="none" stroke="#fff" stroke-width="2"/>
 <rect x="1676" y="6" width="6" height="11" rx="3" fill="#fff"/><path d="M1674.5 13c0 4 2 5 4.5 5s4.5-1 4.5-5M1679 18v3M1676 21.5h6" fill="none" stroke="#fff" stroke-width="1"/>
 <g><ellipse cx="1703" cy="15" rx="5" ry="6.5" fill="#111"/><ellipse cx="1703" cy="17" rx="3.5" ry="4" fill="#fff"/><path d="M1698 14h10l-1 3h-8z" fill="#e02020"/><circle cx="1701.5" cy="11" r="1" fill="#fff"/><circle cx="1704.5" cy="11" r="1" fill="#fff"/><path d="M1698 22h3M1705 22h3" stroke="#f0a020" stroke-width="1.5"/></g>
 <g><ellipse cx="1727" cy="15" rx="5" ry="6.5" fill="#111"/><ellipse cx="1727" cy="17" rx="3.5" ry="4" fill="#fff"/><path d="M1722 14h10l-1 3h-8z" fill="#e02020"/><circle cx="1725.5" cy="11" r="1" fill="#fff"/><circle cx="1728.5" cy="11" r="1" fill="#fff"/><path d="M1722 22h3M1729 22h3" stroke="#f0a020" stroke-width="1.5"/></g>
 <path d="M1744 11h3l4-3.5v14l-4-3.5h-3z" fill="none" stroke="#fff" stroke-width="1.1"/><path d="M1753 11a4 4 0 0 1 0 6M1755.5 9a7 7 0 0 1 0 10M1758 7.5a9.5 9.5 0 0 1 0 13" fill="none" stroke="#aab" stroke-width="1"/>
 <path d="M1768.5 10.5h12v7h-12zM1774.5 6.5v15" fill="none" stroke="#fff" stroke-width="1.2"/>
 <path d="M1797 8l11-2 3 13-11 3z" fill="#e8562a"/><path d="M1806 10c-3-1-6 0-5 2s5 1 5 4-4 3-6 2" fill="none" stroke="#fff" stroke-width="1.6"/>
 <text x="1829" y="19" font-size="12" fill="#fff" font-family="Liberation Sans">15:38</text>
 <path d="M1880.5 8.5h15v10h-5l-3 3v-3h-7z" fill="none" stroke="#fff" stroke-width="1.1"/>
 <path d="M1915.5 0v29" stroke="#5a6470" stroke-width="1"/>
</svg>

<!--CONTENT-->
</body></html>
